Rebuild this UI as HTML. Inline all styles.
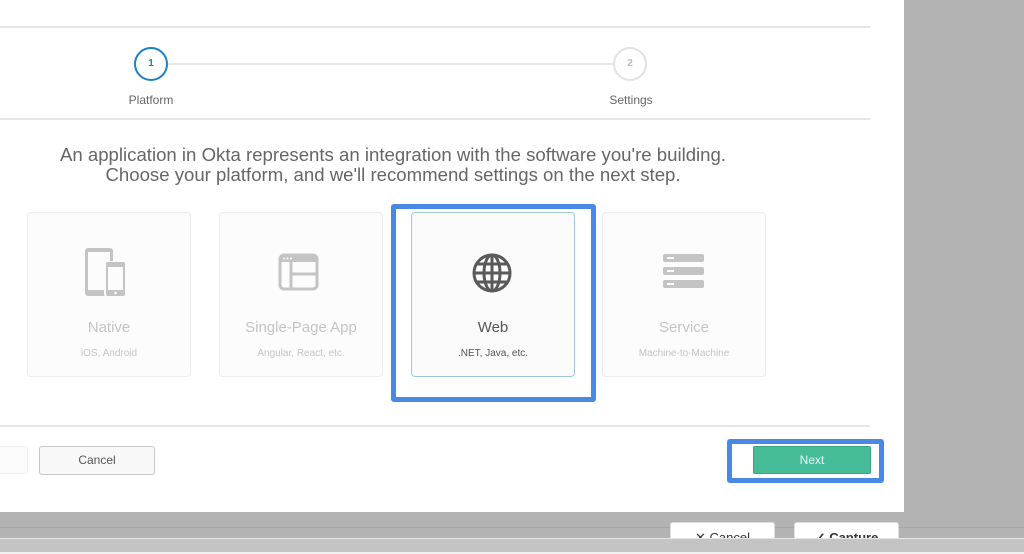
<!DOCTYPE html>
<html><head><meta charset="utf-8"><style>
*{margin:0;padding:0;box-sizing:border-box}
body{width:1024px;height:554px;overflow:hidden;background:#b3b3b3;font-family:"Liberation Sans",sans-serif;position:relative}
.abs{position:absolute}
.panel{left:0;top:0;width:904px;height:512px;background:#fff}
.hl{background:#e6e6e6;height:2px}
.circ{width:34px;height:34px;border-radius:50%;text-align:center;line-height:30px;font-size:10px;font-weight:bold;background:#fff}
.lbl{font-size:12px;color:#666;text-align:center;width:120px}
.card{top:212px;width:164px;height:165px;border:1px solid #ececec;border-radius:4px;background:#fcfcfc;text-align:center}
.card .t{position:absolute;top:106px;width:100%;font-size:15px;color:#c4c4c4}
.card .s{position:absolute;top:135px;width:100%;font-size:10px;color:#c4c4c4}
.intro{top:145px;left:0;width:786px;text-align:center;font-size:18.6px;line-height:20px;color:#666}
.btn{border:1px solid #c8c8c8;border-radius:3px;background:#f8f8f8;font-size:12px;color:#555;text-align:center}
</style></head><body>
<div class="abs panel"></div>
<div class="abs hl" style="left:0;top:26px;width:870px"></div>
<div class="abs hl" style="left:168px;top:63px;width:446px"></div>
<div class="abs circ" style="left:134px;top:47px;border:2px solid #1b80c4;color:#1b80c4">1</div>
<div class="abs circ" style="left:613px;top:47px;border:2px solid #e2e2e2;color:#bbb">2</div>
<div class="abs lbl" style="left:91px;top:93px">Platform</div>
<div class="abs lbl" style="left:571px;top:93px">Settings</div>
<div class="abs hl" style="left:0;top:118px;width:870px"></div>
<div class="abs intro">An application in Okta represents an integration with the software you're building.<br>Choose your platform, and we'll recommend settings on the next step.</div>

<div class="abs card" style="left:27px">
<svg class="abs" style="left:57px;top:35px" width="46" height="50" viewBox="0 0 46 50"><rect x="0" y="0" width="28" height="48" rx="3" fill="#c4c4c4"/><rect x="3" y="4" width="22" height="38" fill="#fcfcfc"/><rect x="19" y="13" width="23" height="36" rx="3" fill="#fcfcfc"/><rect x="21" y="14" width="19" height="34" rx="2" fill="#c4c4c4"/><rect x="23" y="19" width="15" height="23" fill="#fcfcfc"/><circle cx="30.5" cy="45" r="1.3" fill="#fcfcfc"/></svg>
<div class="t">Native</div><div class="s">iOS, Android</div></div>
<div class="abs card" style="left:219px">
<svg class="abs" style="left:58px;top:40px" width="42" height="38" viewBox="0 0 42 38"><rect x="2" y="2" width="37" height="34" rx="4" fill="none" stroke="#c4c4c4" stroke-width="3"/><rect x="2" y="2" width="37" height="7" fill="#c4c4c4"/><path d="M13 9V36M13 21H39" stroke="#c4c4c4" stroke-width="3"/><circle cx="6" cy="5.5" r="1" fill="#fff"/><circle cx="9.5" cy="5.5" r="1" fill="#fff"/><circle cx="13" cy="5.5" r="1" fill="#fff"/></svg>
<div class="t">Single-Page App</div><div class="s">Angular, React, etc.</div></div>
<div class="abs card" style="left:411px;border-color:#9ccadb;background:#fafafa">
<svg class="abs" style="left:59px;top:39px" width="42" height="42" viewBox="0 0 42 42" fill="none" stroke="#5a5a5a" stroke-width="3"><circle cx="21" cy="21" r="18"/><ellipse cx="21" cy="21" rx="8" ry="18"/><path d="M21 3V39M3 21H39M6 12H36M6 30H36"/></svg>
<div class="t" style="color:#555">Web</div><div class="s" style="color:#555">.NET, Java, etc.</div></div>
<div class="abs card" style="left:602px">
<svg class="abs" style="left:60px;top:41px" width="42" height="36" viewBox="0 0 42 36"><rect x="0" y="0" width="41" height="8" rx="2" fill="#c4c4c4"/><rect x="0" y="13" width="41" height="8" rx="2" fill="#c4c4c4"/><rect x="0" y="26" width="41" height="8" rx="2" fill="#c4c4c4"/><rect x="4" y="3" width="7" height="2" fill="#fff"/><rect x="4" y="16" width="7" height="2" fill="#fff"/><rect x="4" y="29" width="7" height="2" fill="#fff"/></svg>
<div class="t">Service</div><div class="s">Machine-to-Machine</div></div>
<div class="abs" style="left:391px;top:204px;width:205px;height:198px;border:5px solid #4a88e6;border-radius:3px"></div>

<div class="abs hl" style="left:0;top:425px;width:870px"></div>
<div class="abs btn" style="left:-4px;top:446px;width:32px;height:28px;border-color:#eee;background:#fcfcfc"></div>
<div class="abs btn" style="left:39px;top:446px;width:116px;height:29px;line-height:27px">Cancel</div>
<div class="abs" style="left:727px;top:439px;width:157px;height:44px;border:5px solid #4a88e6;border-radius:3px;background:#fff"></div>
<div class="abs" style="left:753px;top:446px;width:118px;height:28px;background:#46bd98;border:1px solid #3aa583;border-radius:2px;color:#e6f7f0;font-size:12px;text-align:center;line-height:26px">Next</div>

<div class="abs" style="left:0;top:527px;width:1024px;height:1px;background:#a6a6a6"></div>
<div class="abs btn" style="left:670px;top:522px;width:105px;height:32px;background:#fff;border-color:#ddd;font-size:13px;line-height:30px;color:#333">✕ Cancel</div>
<div class="abs btn" style="left:794px;top:522px;width:105px;height:32px;background:#fff;border-color:#ddd;font-size:13px;line-height:30px;color:#333;font-weight:bold">✓ Capture</div>
<div class="abs" style="left:0;top:538px;width:1024px;height:1px;background:#e6e6e6"></div>
<div class="abs" style="left:0;top:539px;width:1024px;height:13px;background:#c4c4c4"></div>
<div class="abs" style="left:0;top:552px;width:1024px;height:2px;background:#f0f0f0"></div>
</body></html>
